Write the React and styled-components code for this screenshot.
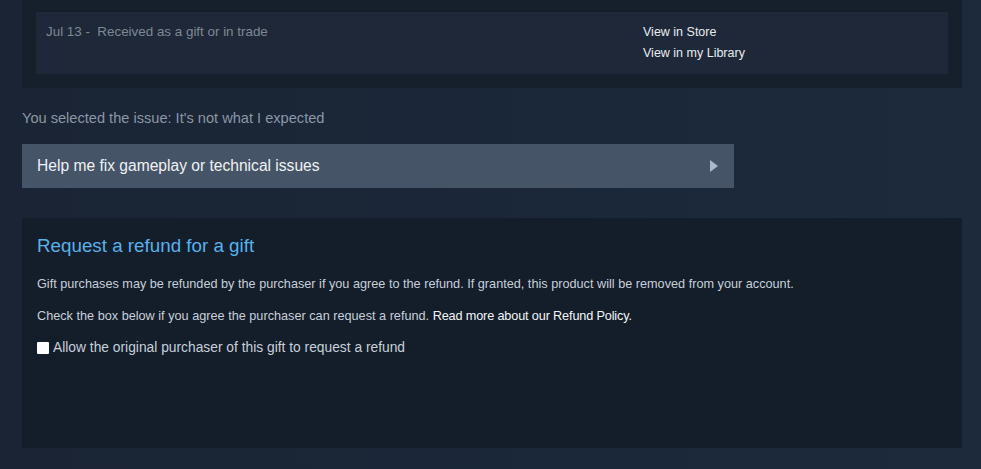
import React from 'react';
import styled, { createGlobalStyle } from 'styled-components';

const GlobalStyle = createGlobalStyle`
  html, body {
    margin: 0;
    padding: 0;
    background-color: #1b2838;
    font-family: 'Liberation Sans', Arial, sans-serif;
  }
`;

const Page = styled.div`
  width: 981px;
  height: 469px;
  overflow: hidden;
  background: linear-gradient(90deg, #1a2434 0%, #1b2839 60%, #1c2a3c 100%);
`;

const Column = styled.div`
  width: 940px;
  margin-left: 22px;
  display: flex;
  flex-direction: column;
`;

const PurchasePanel = styled.div`
  background-color: #161f2c;
  padding: 12px 14px 14px;
  height: 88px;
  box-sizing: border-box;
`;

const PurchaseRow = styled.div`
  background-color: #1e2838;
  height: 62px;
  display: grid;
  grid-template-columns: 597px 1fr;
  padding: 12px 10px 0;
  box-sizing: border-box;
  font-size: 12.5px;
`;

const PurchaseInfo = styled.div`
  color: #7d8895;
  font-size: 13.4px;
  line-height: 16px;
`;

const LinkList = styled.div`
  display: flex;
  flex-direction: column;
  gap: 5px;
`;

const StoreLink = styled.a`
  color: #e7ecf0;
  text-decoration: none;
  line-height: 16px;
`;

const IssueText = styled.div`
  color: #8b97a4;
  font-size: 14.6px;
  margin-top: 22px;
  line-height: 16px;
`;

const HelpButton = styled.div`
  width: 712px;
  height: 44px;
  margin-top: 18px;
  background-color: #465468;
  display: flex;
  align-items: center;
  justify-content: space-between;
  padding: 0 16px 0 15px;
  box-sizing: border-box;
  color: #eef2f5;
  font-size: 15.6px;
`;

const Arrow = styled.span`
  width: 0;
  height: 0;
  border-top: 6px solid transparent;
  border-bottom: 6px solid transparent;
  border-left: 8px solid #a9b8cc;
`;

const RefundPanel = styled.div`
  margin-top: 30px;
  height: 230px;
  background-color: #141d2a;
  padding: 17px 15px;
  box-sizing: border-box;
`;

const Title = styled.h2`
  margin: 0;
  font-weight: normal;
  font-size: 18.8px;
  line-height: 22px;
  color: #58b1ec;
`;

const Paragraph = styled.p`
  margin: ${(p) => p.top}px 0 0;
  font-size: 12.7px;
  line-height: 16px;
  color: #c6d0da;
`;

const Strong = styled.a`
  color: #f3f6f8;
  text-decoration: none;
  letter-spacing: -0.15px;
`;

const CheckRow = styled.label`
  display: flex;
  align-items: center;
  gap: 4px;
  margin-top: 16px;
  font-size: 13.8px;
  color: #c6d0da;
`;

const Box = styled.input`
  margin: 0;
  width: 12px;
  height: 12px;
  appearance: none;
  background: #ffffff;
  border-radius: 1px;
`;

export default function App() {
  return (
    <Page>
      <GlobalStyle />
      <Column>
        <PurchasePanel>
          <PurchaseRow>
            <PurchaseInfo>Jul 13 -&nbsp; Received as a gift or in trade</PurchaseInfo>
            <LinkList>
              <StoreLink href="#">View in Store</StoreLink>
              <StoreLink href="#">View in my Library</StoreLink>
            </LinkList>
          </PurchaseRow>
        </PurchasePanel>
        <IssueText>You selected the issue: It's not what I expected</IssueText>
        <HelpButton>
          <span>Help me fix gameplay or technical issues</span>
          <Arrow />
        </HelpButton>
        <RefundPanel>
          <Title>Request a refund for a gift</Title>
          <Paragraph top={19}>
            Gift purchases may be refunded by the purchaser if you agree to the refund. If granted, this product will be removed from your account.
          </Paragraph>
          <Paragraph top={16}>
            Check the box below if you agree the purchaser can request a refund. <Strong href="#">Read more about our Refund Policy.</Strong>
          </Paragraph>
          <CheckRow>
            <Box type="checkbox" />
            Allow the original purchaser of this gift to request a refund
          </CheckRow>
        </RefundPanel>
      </Column>
    </Page>
  );
}
